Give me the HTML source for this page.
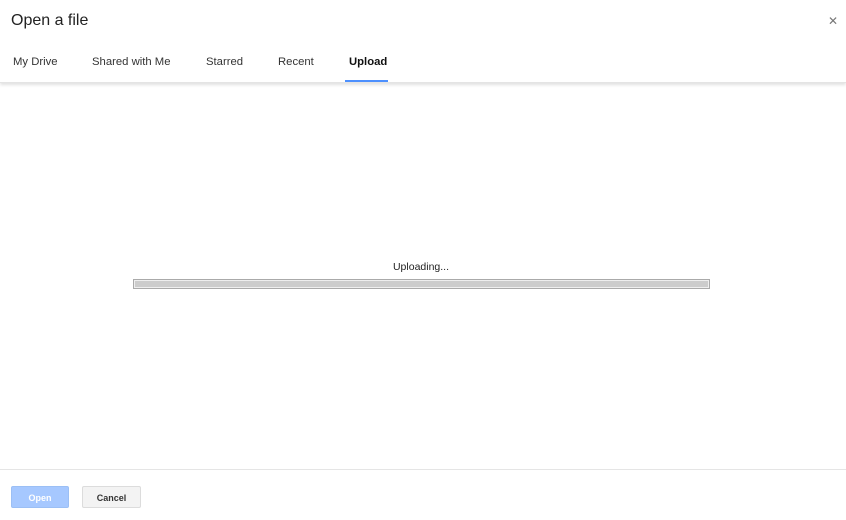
<!DOCTYPE html>
<html><head><style>
body{margin:0;width:846px;height:520px;background:#fff;font-family:"Liberation Sans",Arial,sans-serif;position:relative;overflow:hidden}
.title{position:absolute;left:11px;top:12px;font-size:16px;color:#222}
.x{position:absolute;left:828px;top:14px;font-size:12px;color:#777}
.tabs{position:absolute;left:0;top:0;width:846px;height:82px;box-shadow:0 2px 3px rgba(0,0,0,.12);border-bottom:1px solid #e4e4e4}
.tab{position:absolute;top:56px;font-size:11.3px;color:#333}
.ul{position:absolute;left:345px;top:80px;width:43px;height:2px;background:#4d90fe}
.up{position:absolute;left:0;width:846px;top:261px;text-align:center;font-size:10.5px;color:#222;text-indent:-4px}
.bar{position:absolute;left:133px;top:279px;width:575px;height:8px;border:1px solid #aaa;background:#ccc;box-shadow:inset 0 0 0 1px #eee}
.foot{position:absolute;left:0;top:469px;width:846px;border-top:1px solid #e5e5e5}
.btn{position:absolute;top:486px;height:22px;border-radius:2px;font-size:9px;font-weight:bold;text-align:center;line-height:22px;box-sizing:border-box}
</style></head><body>
<div class="tabs"></div>
<div class="title">Open a file</div>
<div class="x">✕</div>
<div class="tab" style="left:13px">My Drive</div>
<div class="tab" style="left:92px">Shared with Me</div>
<div class="tab" style="left:206px">Starred</div>
<div class="tab" style="left:278px">Recent</div>
<div class="tab" style="left:349px;font-weight:bold;color:#111">Upload</div>
<div class="ul"></div>
<div class="up">Uploading...</div>
<div class="bar"></div>
<div class="foot"></div>
<div class="btn" style="left:11px;width:58px;background:#a6c8ff;border:1px solid #9bbff5;color:#fff">Open</div>
<div class="btn" style="left:82px;width:59px;background:#f3f3f3;border:1px solid #dcdcdc;color:#333">Cancel</div>
</body></html>
